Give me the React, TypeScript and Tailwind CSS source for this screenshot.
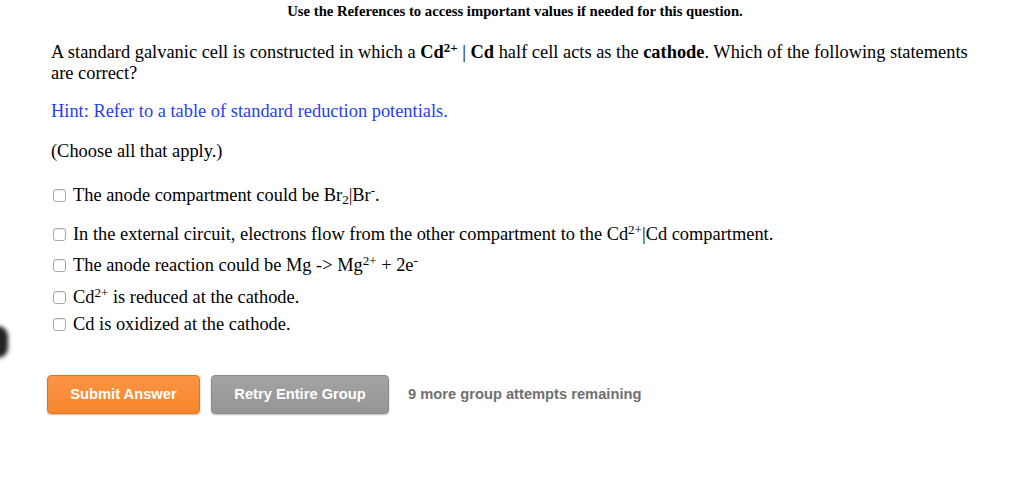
const Box = () => (
  <span className="inline-block w-[13px] h-[13px] ml-[2px] rounded-[3px] border border-[#a9a9a9] bg-white shadow-[inset_0_1px_1px_rgba(0,0,0,0.08)] mr-[7px] shrink-0" />
);

const Option = ({ children, className }: { children: React.ReactNode; className: string }) => (
  <div className={`flex items-center h-[20px] ${className}`}>
    <Box />
    <span>{children}</span>
  </div>
);

const Sup = ({ children }: { children: React.ReactNode }) => <sup className="text-[13px]">{children}</sup>;

export default function App() {
  return (
    <div className="relative w-[1024px] h-[485px] bg-white overflow-hidden text-black font-['Liberation_Serif',serif]">
      <div className="absolute left-[-12px] top-[326px] w-[20px] h-[32px] rounded-full bg-[#222] blur-[2px]" />
      <div className="pt-[3px] text-center text-[14.7px] font-bold leading-[16px] pl-[6px]">
        Use the References to access important values if needed for this question.
      </div>
      <div className="pl-[51px] pr-[48px] text-[18.4px] leading-[21px]">
        <p className="mt-[23px]">
          A standard galvanic cell is constructed in which a <b>Cd<Sup>2+</Sup></b> | <b>Cd</b> half cell acts as the <b>cathode</b>. Which of the following statements are correct?
        </p>
        <p className="mt-[17px] text-[#1f3ff2]">
          Hint: Refer to a table of standard reduction potentials.
        </p>
        <p className="mt-[19px]">(Choose all that apply.)</p>
        <div className="leading-[20px]">
          <Option className="mt-[23px]">
            The anode compartment could be Br<sub className="text-[13px]">2</sub>|Br<Sup>-</Sup>.
          </Option>
          <Option className="mt-[19px]">
            In the external circuit, electrons flow from the other compartment to the Cd<Sup>2+</Sup>|Cd compartment.
          </Option>
          <Option className="mt-[11px]">
            The anode reaction could be Mg -&gt; Mg<Sup>2+</Sup> + 2e<Sup>-</Sup>
          </Option>
          <Option className="mt-[12px]">
            Cd<Sup>2+</Sup> is reduced at the cathode.
          </Option>
          <Option className="mt-[7px]">Cd is oxidized at the cathode.</Option>
        </div>
      </div>
      <div className="flex items-center pl-[47px] mt-[41px] font-['Liberation_Sans',sans-serif] font-bold text-[14.7px]">
        <button className="w-[153px] h-[39px] rounded-[4px] border border-[#e8731f] bg-gradient-to-b from-[#fb9445] to-[#f7862b] text-white shadow-[0_1px_2px_rgba(0,0,0,0.25)]">
          Submit Answer
        </button>
        <button className="ml-[11px] w-[178px] h-[39px] rounded-[4px] border border-[#8a8a8a] bg-gradient-to-b from-[#a3a3a3] to-[#959595] text-white shadow-[0_1px_2px_rgba(0,0,0,0.25)]">
          Retry Entire Group
        </button>
        <span className="ml-[19px] text-[#707070]">9 more group attempts remaining</span>
      </div>
    </div>
  );
}
